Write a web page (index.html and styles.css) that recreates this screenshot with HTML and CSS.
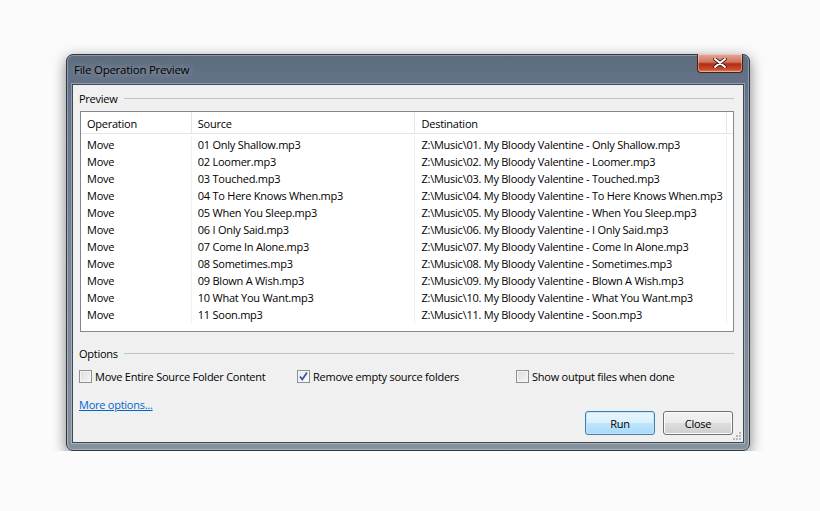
FILE: index.html
```html
<!DOCTYPE html>
<html lang="en">
<head>
  <meta charset="UTF-8">
  <title>File Operation Preview</title>
  <link rel="stylesheet" href="styles.css">
</head>
<body>
  <div class="window">
    <div class="titlebar">
      <span class="title">File Operation Preview</span>
    </div>
    <div class="close-btn">
      <svg width="14" height="10" viewBox="0 0 14 10">
        <path d="M2 1 L12 9 M12 1 L2 9" stroke="#3b1a14" stroke-width="3.6" stroke-linecap="round"/>
        <path d="M2 1 L12 9 M12 1 L2 9" stroke="#ffffff" stroke-width="2" stroke-linecap="round"/>
      </svg>
    </div>

    <div class="client">
      <div class="group-label"><span>Preview</span></div>

      <div class="list">
        <div class="list-head">
          <div class="col col-op">Operation</div>
          <div class="col col-src">Source</div>
          <div class="col col-dst">Destination</div>
          <div class="col col-rest"></div>
        </div>
        <div class="list-body" id="rows"></div>
      </div>

      <div class="group-label options"><span>Options</span></div>

      <div class="checks">
        <label class="check"><span class="box"></span>Move Entire Source Folder Content</label>
        <label class="check"><span class="box checked">
          <svg width="11" height="11" viewBox="0 0 11 11"><path d="M2 5.5 L4.3 8.5 L9 1.5" fill="none" stroke="#3c5596" stroke-width="1.8"/></svg>
        </span>Remove empty source folders</label>
        <label class="check"><span class="box"></span>Show output files when done</label>
      </div>

      <div class="bottom">
        <a class="more" href="#">More options...</a>
        <div class="buttons">
          <button class="btn default">Run</button>
          <button class="btn">Close</button>
        </div>
      </div>

      <svg class="grip" width="10" height="10" viewBox="0 0 10 10">
        <g fill="#b8b8b8">
          <rect x="7" y="1" width="2" height="2"/>
          <rect x="4" y="4" width="2" height="2"/><rect x="7" y="4" width="2" height="2"/>
          <rect x="1" y="7" width="2" height="2"/><rect x="4" y="7" width="2" height="2"/><rect x="7" y="7" width="2" height="2"/>
        </g>
      </svg>
    </div>
  </div>

  <script>
    const tracks = [
      'Only Shallow', 'Loomer', 'Touched', 'To Here Knows When', 'When You Sleep',
      'I Only Said', 'Come In Alone', 'Sometimes', 'Blown A Wish', 'What You Want', 'Soon'
    ];
    const rows = document.getElementById('rows');

    tracks.forEach((name, i) => {
      const n = String(i + 1).padStart(2, '0');
      const row = document.createElement('div');
      row.className = 'row';
      row.innerHTML =
        '<div class="col col-op">Move</div>' +
        `<div class="col col-src">${n} ${name}.mp3</div>` +
        `<div class="col col-dst">Z:\\Music\\${n}. My Bloody Valentine - ${name}.mp3</div>` +
        '<div class="col col-rest"></div>';
      rows.appendChild(row);
    });
  </script>
</body>
</html>
```

FILE: styles.css
```css
body {
  margin: 0;
  padding: 54px 0 0 66px;
  background: #fbfbfb;
  font-family: "Open Sans", "Noto Sans", sans-serif;
  font-size: 11px;
  letter-spacing: -0.25px;
  color: #000;
}

.window {
  position: relative;
  width: 672px;
  padding: 0 5px 7px 5px;
  border: 1px solid #2f3742;
  border-radius: 7px;
  background: linear-gradient(to bottom, #5e6c7e 0%, #65748a 10%, #7a8796 60%, #86919e 100%);
  box-shadow: 0 4px 14px rgba(0, 0, 0, 0.5), inset 0 0 0 1px rgba(255, 255, 255, 0.3);
}

.titlebar {
  height: 29px;
  display: flex;
  align-items: center;
  padding-left: 2px;
}

.title {
  font-size: 11.5px;
  color: #000;
  text-shadow: 0 0 7px rgba(255, 255, 255, 0.55);
}

.close-btn {
  position: absolute;
  top: -1px;
  right: 6px;
  width: 44px;
  height: 18px;
  border: 1px solid #4b2117;
  border-top: none;
  border-radius: 0 0 4px 4px;
  background: linear-gradient(to bottom, #e7a898 0%, #d0745f 45%, #b42b10 55%, #c84c2e 85%, #e08b66 100%);
  box-shadow: inset 0 0 0 1px rgba(255, 255, 255, 0.35);
  display: flex;
  align-items: center;
  justify-content: center;
}

.client {
  position: relative;
  background: #f0f0f0;
  border: 1px solid #3f4855;
  box-shadow: 0 0 0 1px rgba(255, 255, 255, 0.3);
  padding: 5px 9px 7px 6px;
}

.group-label {
  display: flex;
  align-items: center;
  height: 16px;
}

.group-label span {
  color: #000;
  padding-right: 6px;
}

.group-label::after {
  content: "";
  flex: 1;
  height: 1px;
  background: #c0c4c8;
}

.group-label.options {
  margin-top: 13px;
}

.list {
  margin: 5px 0 0 1px;
  height: 219px;
  border: 1px solid #828790;
  background: #ffffff;
}

.list-head {
  display: flex;
  height: 21px;
  border-bottom: 1px solid #e3e6ea;
  margin-bottom: 2px;
}

.list-head .col {
  line-height: 23px;
  border-right: 1px solid #e5e5e5;
}

.row {
  display: flex;
  height: 17px;
}

.row .col {
  line-height: 17px;
  border-right: 1px solid #f0f0f0;
}

.col {
  padding-left: 6px;
  box-sizing: border-box;
  white-space: nowrap;
  overflow: hidden;
}

.col-op { width: 111px; }
.col-src { width: 224px; }
.col-dst { width: 312px; }
.col-rest { flex: 1; border-right: none !important; }

.checks {
  display: grid;
  grid-template-columns: 218px 219px 1fr;
  margin-top: 7px;
  height: 16px;
}

.check {
  display: flex;
  align-items: center;
  gap: 3px;
}

.box {
  width: 11px;
  height: 11px;
  border: 1px solid #8e8f8f;
  background: linear-gradient(135deg, #dcdcdc, #f6f6f6);
  box-shadow: inset 0 0 0 1px #f4f4f4;
  display: flex;
  align-items: center;
  justify-content: center;
}

.box.checked {
  background: linear-gradient(135deg, #e1e6ee, #ffffff);
}

.bottom {
  margin-top: 13px;
  display: flex;
  justify-content: space-between;
  align-items: flex-start;
}

.more {
  color: #0066cc;
  text-decoration: underline;
  line-height: 16px;
}

.buttons {
  display: flex;
  gap: 8px;
  margin-top: 14px;
  margin-right: 1px;
}

.btn {
  width: 70px;
  height: 24px;
  font-family: inherit;
  font-size: 11px;
  letter-spacing: -0.25px;
  color: #000;
  border: 1px solid #707070;
  border-radius: 3px;
  background: linear-gradient(to bottom, #f2f2f2 0%, #ebebeb 48%, #dddddd 52%, #cfcfcf 100%);
  box-shadow: inset 0 0 0 1px #fcfcfc;
  padding: 0;
}

.btn.default {
  border-color: #3c7fb1;
  background: linear-gradient(to bottom, #eaf6fd 0%, #d9f0fc 48%, #bee6fd 52%, #a7d9f5 100%);
  box-shadow: inset 0 0 0 1px #c6e6f8;
}

.grip {
  position: absolute;
  right: 1px;
  bottom: 1px;
}
```
